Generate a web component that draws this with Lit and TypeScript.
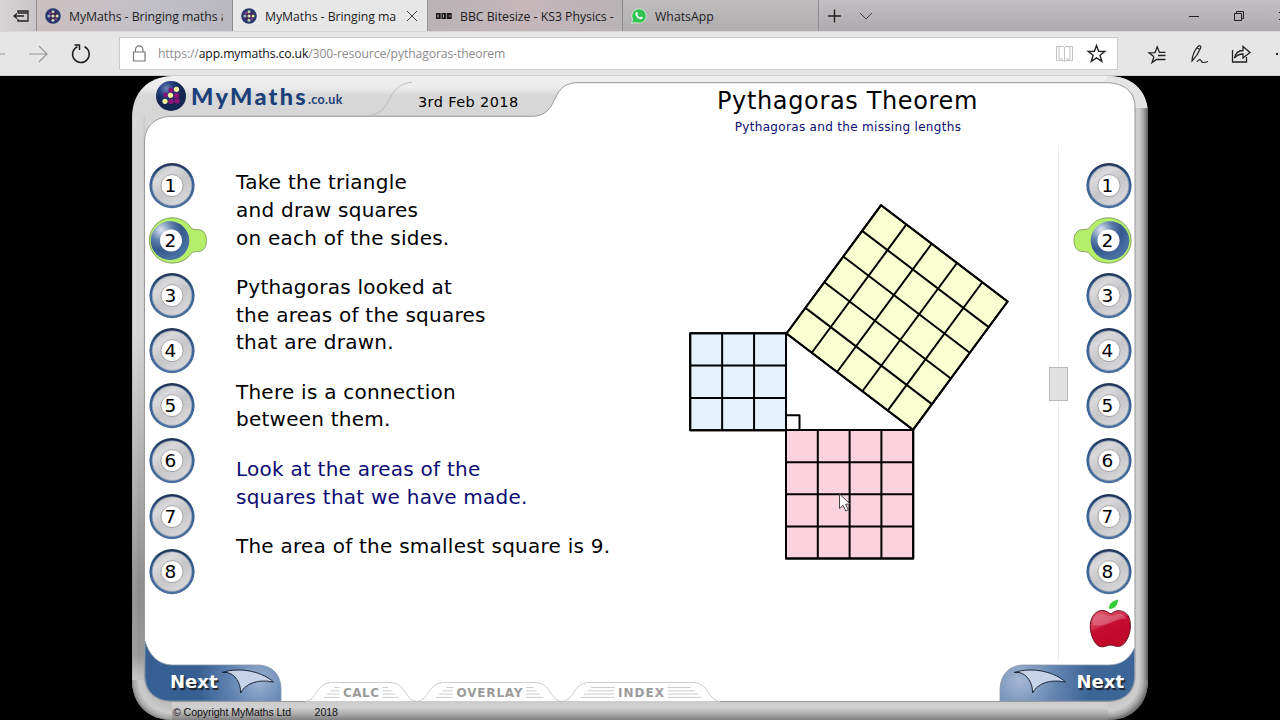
import { LitElement, html, svg, css } from "lit";
import { customElement, property } from "lit/decorators.js";

const favicon = svg`
  <circle cx="8" cy="8" r="7.8" fill="#27396f"/>
  <circle cx="8" cy="8" r="5.4" fill="#41255f"/>
  <circle cx="8" cy="3.8" r="1.5" fill="#b9d3b4"/><circle cx="3.9" cy="8" r="1.5" fill="#9fb6c8"/>
  <circle cx="12.1" cy="8" r="1.5" fill="#d6dfa0"/><circle cx="8" cy="12.2" r="1.5" fill="#b9d3b4"/>
  <circle cx="8" cy="8" r="1.6" fill="#d8e6a8"/><circle cx="5" cy="5" r="1" fill="#a04a9a"/><circle cx="11" cy="11" r="1" fill="#a04a9a"/>`;

@customElement("browser-chrome")
class BrowserChrome extends LitElement {
  static styles = css`
    :host { display: block; font: 12.3px "Open Sans", "Noto Sans", sans-serif; color: #1d1d1f; }
    svg { display: block; flex: none; }
    .tabs { display: flex; height: 31px; background: linear-gradient(#c3bfc2, #aeaaad); }
    .tab { display: flex; align-items: center; box-sizing: border-box; height: 31px; padding-left: 8px; gap: 8px;
      border-right: 1px solid #8e8b8e; white-space: nowrap; overflow: hidden; }
    .set { width: 37px; padding-left: 13px; background: linear-gradient(90deg, #d9d5d6, #c9c4c7); }
    .first { width: 196px; background: linear-gradient(90deg, #cbbfc0, #c1c0c6 60%, #b9b8be); }
    .active { width: 195px; background: #e8e7e8; border-right-color: #9b989b; }
    .bbc { width: 195px; background: linear-gradient(90deg, #b8b3b6, #c6b6ba 50%, #b8b3b6); }
    .wa { width: 196px; background: linear-gradient(#c0bdbf, #b0adaf); }
    .label { overflow: hidden; padding-top: 1px; }
    .l1 { width: 154px; } .l2 { width: 134px; } .l3 { width: 160px; }
    .l1 { letter-spacing: -.06px; }
    .l2 { letter-spacing: -.06px; }
    .l3 { letter-spacing: -.03px; }
    .tools { display: flex; align-items: center; margin-left: 9px; }
    .win { display: flex; margin-left: auto; align-items: center; }
    .bar { display: flex; box-sizing: border-box; height: 45px; align-items: center; padding-top: 1px; background: #e7e6e7;
      border-top: 1px solid #d8d6d8; border-bottom: 1px solid #cfcdcf; }
    .nav { width: 119px; }
    .addr { display: flex; align-items: center; width: 997px; height: 31px; margin-top: -1px; background: #fff; border: 1px solid #cbc9cb; box-sizing: content-box; }
    .url { flex: 1; color: #8d8b8d; font-size: 12.2px; letter-spacing: -.11px; }
    .host { color: #111; }
  `;
  render() {
    return html`
      <div class="tabs">
        <div class="tab set"><svg width="17" height="14" fill="none" stroke="#222" stroke-width="1.3"><path d="M5 4V2h10v10H5v-2M5 4h10M1 7h10M4 4.500L1 7l3 2.500"/></svg></div>
        <div class="tab first"><svg width="16" height="16">${favicon}</svg><span class="label l1">MyMaths - Bringing maths a</span></div>
        <div class="tab active"><svg width="16" height="16">${favicon}</svg><span class="label l2">MyMaths - Bringing ma</span>
          <svg width="12" height="12" stroke="#444" stroke-width="1"><path d="M0 1l10 10M10 1L0 11"/></svg></div>
        <div class="tab bbc"><svg width="16" height="8"><path fill="#1c1a1c" d="M0 1h4.700v6H0zM5.500 1h4.700v6H5.500zM11 1h4.700v6H11z"/><path stroke="#bbb" d="M2 2.500v3M7.500 2.500v3M12.800 4h2"/></svg><span class="label l3">BBC Bitesize - KS3 Physics -</span></div>
        <div class="tab wa"><svg width="16" height="16"><path d="M.6 15.500L1.700 11.500A7.200 7.200 0 1 1 4.700 14.400Z" fill="#2fc34f" stroke="#e8f3ea" stroke-width=".8"/><path d="M5.200 4.200c1-.6 1.300.2 1.700 1.400 0 .7-.8 1-.5 1.400.7 1.200 1.500 1.900 2.700 2.400.5 0 .8-1.100 1.300-.9 1.400.6 1.700.9 1.200 1.800-1.700 2-5 .2-6.400-2C4 6.700 4.200 5 5.200 4.200Z" fill="#fff"/></svg><span class="label">WhatsApp</span></div>
        <div class="tools"><svg width="52" height="16" fill="none" stroke="#222"><path stroke-width="1.400" d="M0 8h13M6.500 1.500v13"/><path d="M32 5l6 6 6-6" stroke="#444"/></svg></div>
        <div class="win"><svg width="92" height="16" fill="none" stroke="#222"><path d="M1 8.500h10M46.500 5.500h7v7h-7zM48.500 5.500v-2h7v7h-2" /><path d="M91 4l8 8M91 12l8-8"/></svg></div>
      </div>
      <div class="bar">
        <svg class="nav" width="119" height="32" fill="none"><path d="M0 16h5M29 16h18M39 8l8 8-8 8" stroke="#9a989a" stroke-width="1.200"/><path d="M77.500 8.600A8.300 8.300 0 1 0 84.500 8.700M74.500 7h5v5" stroke="#1c1c1c" stroke-width="1.500"/></svg>
        <div class="addr">
          <svg width="38" height="31" fill="none" stroke="#777" stroke-width="1.200"><path d="M13.500 14h11.500v9h-11.500zM15.500 14v-2.500a3.700 3.700 0 0 1 7.400 0V14"/></svg>
          <span class="url">https://<span class="host">app.mymaths.co.uk</span>/300-resource/pythagoras-theorem</span>
          <svg width="63" height="31" fill="none"><path d="M2.500 8.500h6.500l1.500 1 1.500-1h6.500v14h-6.500l-1.500 1-1.500-1H2.500zM10.500 9.500v14M5 8v13h4M16 8v13h-4" stroke="#c3c1c3"/><path d="M42.500 7.500l2.200 5.800 6.200.2-4.900 3.800 1.800 6-5.300-3.500-5.200 3.500 1.800-6-4.900-3.800 6.200-.2z" stroke="#222" stroke-width="1.400"/></svg>
        </div>
        <svg width="161" height="32" fill="none" stroke="#222" stroke-width="1.300">
          <path d="M36 18.700l-5-3.900 6-.2 2.200-5.800 2.200 5.600H47.500M40 17.500h7.500M39 21.500h8.500M36 18.700l-2 5.800 5-3.400"/>
          <path d="M74 23c0-5 3-12 6.500-15 1.500-1 3 .5 2 2.200C81 14 77 20 74 23Zm5-13l3 1.500M79 24c3-5 4-1 5 0s3 .5 6-.5" stroke-width="1.200"/>
          <path d="M114.500 12v12h14v-5M116.500 20c1-5 4.500-7.500 8.500-7.500V8.500l7 6-7 5.500v-4c-3.500 0-6 1-8.500 4Z"/>
          <path d="M158 16h2" stroke-width="2"/>
        </svg>
      </div>`;
  }
}

@customElement("step-nav")
class StepNav extends LitElement {
  @property() side = "left";
  @property({ type: Number }) current = 2;
  static styles = css`
    :host { display: flex; flex-direction: column; }
    svg { display: block; overflow: visible; }
    .num { font: 18.500px "DejaVu Sans", sans-serif; text-anchor: middle; }
  `;
  render() {
    const right = this.side === "right";
    const cx = right ? 40 : 28;
    return [1, 2, 3, 4, 5, 6, 7, 8].map((n) => {
      const on = n === this.current;
      return html`<svg width="68" height="55.2" viewBox="0 0 68 55.2">
        <defs>
          <linearGradient id="ring" x2="0" y2="1"><stop offset="0" stop-color="#1c3050"/><stop offset=".35" stop-color="#355d92"/><stop offset="1" stop-color="#4c719f"/></linearGradient>
          <linearGradient id="face" x2=".7" y2="1"><stop offset="0" stop-color="#b5b5b9"/><stop offset=".3" stop-color="#dadadc"/><stop offset=".6" stop-color="#c6c6c8"/><stop offset="1" stop-color="#d8d8da"/></linearGradient>
          <radialGradient id="ball" cx=".27" cy=".22" r=".75"><stop offset="0" stop-color="#dfe6f2"/><stop offset=".4" stop-color="#5b7dab"/><stop offset=".7" stop-color="#34598c"/><stop offset="1" stop-color="#486fa3"/></radialGradient>
        </defs>
        ${on
          ? svg`<g transform="${right ? "translate(67.500 0) scale(-1 1)" : ""}">
              <path d="M28 4.800c9 0 15.500 4.500 19 10 1.500 1.500 2.700 1.800 6.500 1.800 6.800 0 9 5.500 9 11s-2.200 11-9 11c-3.800 0-5 .5-6.500 2-3.500 5.500-10 9.500-19 9.500a22.650 22.650 0 0 1 0-45.300Z" fill="#b5ee68" stroke="#86a262" stroke-width="1"/>
            </g>
            <circle cx="${right ? 41 : 26}" cy="27.600" r="19.300" fill="url(#ball)"/>`
          : svg`<circle cx="${cx}" cy="27.600" r="22.600" fill="url(#ring)"/>
            <circle cx="${cx}" cy="27.600" r="19.800" fill="url(#face)" stroke="#8fa0b8" stroke-width=".7"/>
            <circle cx="${cx}" cy="27.600" r="11" fill="#fff" stroke="#77777c" stroke-width=".6"/>`}
        ${on ? svg`<circle cx="${cx - (right ? 0.5 : 1)}" cy="27.600" r="11" fill="#fff"/>` : ""}
        <text class="num" x="${cx - 1.500}" y="34.300">${n}</text>
      </svg>`;
    });
  }
}

const grid = (n: number, o: number[], u: number[], v: number[], fill: string) => {
  const at = (i: number, j: number) =>
    `${o[0] + (u[0] * i + v[0] * j) / n} ${o[1] + (u[1] * i + v[1] * j) / n}`;
  let d = "";
  for (let i = 1; i < n; i++) d += `M${at(i, 0)}L${at(i, n)}M${at(0, i)}L${at(n, i)}`;
  const edge = `M${at(0, 0)}L${at(n, 0)}L${at(n, n)}L${at(0, n)}Z`;
  return svg`<path d="${edge}" fill="${fill}"/><path d="${edge}${d}" fill="none"/>`;
};

@customElement("squares-diagram")
class SquaresDiagram extends LitElement {
  static styles = css`:host, svg { display: block; }`;
  render() {
    return html`<svg width="360" height="400" viewBox="670 180 360 400" stroke="#000" stroke-width="2" stroke-linejoin="round">
      ${grid(3, [690.2, 333.3], [95.8, 0], [0, 96.9], "#e3f2fc")}
      ${grid(4, [786, 430], [127.2, 0], [0, 128.600], "#fad3df")}
      ${grid(5, [786.500, 333.500], [126.500, 96.300], [94.600, -128.300], "#f9ffd0")}
      <path d="M786 415.200h13.500V430" fill="none"/>
      <path d="M839.500 494v14.500l3.600-3.200 2.700 5.700 2.500-1.200-2.700-5.500 4.400-.4Z" fill="#fff" stroke="#444" stroke-width="1"/>
    </svg>`;
  }
}

@customElement("frame-art")
class FrameArt extends LitElement {
  static styles = css`:host, svg { display: block; }`;
  render() {
    return html`<svg width="1280" height="644" viewBox="0 76 1280 644">
      <defs>
        <linearGradient id="left" gradientUnits="userSpaceOnUse" x1="0" y1="76" x2="0" y2="720">
          <stop offset="0" stop-color="#f0f0f0"/><stop offset=".018" stop-color="#ececec"/><stop offset=".03" stop-color="#d8d8d8"/><stop offset=".1" stop-color="#d3d3d3"/>
          <stop offset=".4" stop-color="#d5d5d5"/><stop offset=".62" stop-color="#acacac"/><stop offset=".8" stop-color="#8b8b8b"/><stop offset=".9" stop-color="#979797"/><stop offset=".935" stop-color="#c2c2c2"/><stop offset="1" stop-color="#8c8c8c"/>
        </linearGradient>
        <linearGradient id="right" gradientUnits="userSpaceOnUse" x1="1134" y1="0" x2="1148" y2="0">
          <stop offset="0" stop-color="#c9c9c9"/><stop offset=".35" stop-color="#cfcfcf"/><stop offset=".7" stop-color="#a4a4a4"/><stop offset="1" stop-color="#5e5e5e"/>
        </linearGradient>
        <linearGradient id="base" gradientUnits="userSpaceOnUse" x1="0" y1="701" x2="0" y2="720">
          <stop offset="0" stop-color="#cccccc"/><stop offset=".35" stop-color="#d0d0d0"/><stop offset=".7" stop-color="#aaaaaa"/><stop offset="1" stop-color="#808080"/>
        </linearGradient>
        <linearGradient id="edge" gradientUnits="userSpaceOnUse" x1="131" y1="0" x2="145" y2="0">
          <stop offset="0" stop-color="#555" stop-opacity=".3"/><stop offset=".25" stop-color="#fff" stop-opacity=".1"/><stop offset=".6" stop-color="#fff" stop-opacity="0"/><stop offset="1" stop-color="#777" stop-opacity=".12"/>
        </linearGradient>
        <radialGradient id="corner" gradientUnits="userSpaceOnUse" cx="1108" cy="680" r="40">
          <stop offset=".65" stop-color="#c9c9c9"/><stop offset=".77" stop-color="#cfcfcf"/><stop offset=".9" stop-color="#a4a4a4"/><stop offset="1" stop-color="#6c6c6c"/>
        </radialGradient>
        <radialGradient id="cornerL" gradientUnits="userSpaceOnUse" cx="172" cy="680" r="40">
          <stop offset=".65" stop-color="#c0c0c0"/><stop offset=".82" stop-color="#cccccc"/><stop offset=".95" stop-color="#a8a8a8"/><stop offset="1" stop-color="#8a8a8a"/>
        </radialGradient>
        <radialGradient id="nextL" gradientUnits="userSpaceOnUse" cx="259" cy="681" r="62">
          <stop offset="0" stop-color="#9db2d2"/><stop offset=".5" stop-color="#5e82b0"/><stop offset="1" stop-color="#365f93"/>
        </radialGradient>
        <radialGradient id="nextR" gradientUnits="userSpaceOnUse" cx="1020" cy="681" r="70">
          <stop offset="0" stop-color="#a5b8d4"/><stop offset=".5" stop-color="#6686b2"/><stop offset="1" stop-color="#3c6598"/>
        </radialGradient>
      </defs>
      <path d="M132 118C132 92 148 77 172 76H1108C1132 76 1148 92 1148 114V680C1148 704 1132 720 1108 720H172C148 720 132 704 132 680Z" fill="url(#left)"/>
      <path d="M132 116h13v564h-13Z" fill="url(#edge)"/>
      <path d="M1108 76C1132 76 1146 90 1147.500 109H1134V90H1100Z" fill="#e4e4e4"/>
      <path d="M1134 108h14v573H1134Z" fill="url(#right)"/>
      <path d="M170 700H1110V720H170Z" fill="url(#base)"/>
      <path d="M1108 720C1132 720 1148 704 1148 680H1130L1108 700Z" fill="url(#corner)"/>
      <path d="M172 720C148 720 132 704 132 680H146L172 700Z" fill="url(#cornerL)"/>
      <path d="M144.500 142C144.500 126 156 116.300 172 116.300H532C560 116 549 85 575 82.700H1106C1124 82.700 1135 92 1135 107V676C1135 692 1124 701.500 1108 701.500H172C155 701.500 144.500 692 144.500 676Z" fill="#fff" stroke="#999" stroke-width="1"/>
      <path d="M367 116C394 114 385 84 412 82.300" fill="none" stroke="#bcbcbc"/>
      <path d="M145 641C149 655 158 664.700 172 665H259C273 666 281 675 281 689V701H172C155 701 145 691 145 676Z" fill="url(#nextL)" stroke="#8a97a8" stroke-width=".8"/>
      <path d="M1134.500 648C1130 658 1122 665 1109 665H1022C1008 666 1000 676 1000 690V701H1108C1124 701 1134.500 692 1134.500 676Z" fill="url(#nextR)" stroke="#8a97a8" stroke-width=".8"/>
    </svg>`;
  }
}

const swoosh = html`<svg width="54" height="28" viewBox="221 668 54 28"><path d="M222 673.500C242 667 264 674 273.500 683C258 680 246 684 240.500 694C241 684 235 675 227 673.500L222 673.500Z" fill="#c6d3e8" stroke="#1c2737" stroke-width="1"/></svg>`;

const folderTab = (w: number, label: string, textWidth: number) => {
  const a = (w - textWidth) / 2 - 2;
  const b = w - a;
  let d = "";
  for (let i = 0; i < 4; i++) {
    const y = 8.500 + i * 3.300;
    d += `M${29 - i * 3.500} ${y}H${a}M${b} ${y}H${w - 29 + i * 3.500}`;
  }
  return html`<svg width="${w}" height="23" viewBox="0 0 ${w} 23" fill="none" stroke="#cdcdcd">
    <path d="M0 22.500C12 22 11 4 26 3.500H${w - 26}C${w - 11} 4 ${w - 12} 22 ${w} 22.500" fill="#fff"/>
    <path d="${d}"/>
    <text class="tablabel" x="${w / 2}" y="17.900" textLength="${textWidth - 3}">${label}</text>
  </svg>`;
};

@customElement("app-root")
class AppRoot extends LitElement {
  static styles = css`
    :host { display: block; width: 1280px; height: 720px; overflow: hidden; background: #000; font-family: "DejaVu Sans", sans-serif; color: #000; }
    svg { display: block; flex: none; }
    .stage { display: grid; height: 644px; }
    .stage > * { grid-area: 1 / 1; }
    .content { display: grid; grid-template: 81.500px 502.500px 42px 18px / 992px; width: 992px; margin-left: 144px; }
    .head { display: flex; }
    .logo { display: flex; flex: none; box-sizing: border-box; width: 273px; padding: 4px 0 0 11px; }
    .brand { font: 900 23.500px/33px Lato, sans-serif; color: #1b4079; letter-spacing: 2.300px; margin-left: 4px; }
    .dom { font: 700 12.500px/40px Lato, sans-serif; color: #1b4079; letter-spacing: .3px; }
    .date { flex: none; width: 128px; box-sizing: border-box; font-size: 14.500px; line-height: 53px; letter-spacing: .38px; padding-left: 1px; }
    .titles { flex: none; width: 591px; margin-right: 0; text-align: center; }
    .title { font-size: 24px; line-height: 30px; letter-spacing: .65px; padding: 10px 0 0 14px; }
    .sub { font-size: 12px; line-height: 16px; letter-spacing: .32px; color: #0c0c72; padding: 3px 0 0 15px; }
    .body { display: grid; grid-template-columns: 92px 434px 388px 78px; }
    .left { width: 68px; }
    .copy { padding-top: 11.700px; font-size: 20px; line-height: 27.700px; letter-spacing: .24px; white-space: nowrap; }
    .copy p { margin: 0 0 21.700px; }
    .blue { color: #0c0c72; }
    .plot { padding-top: 22.500px; display: grid; grid-template-columns: 360px 1fr; }
    .slider { display: grid; justify-items: center; width: 20px; height: 516px; margin-top: -35px; margin-left: 18px; }
    .slider > * { grid-area: 1 / 1; }
    .rail { width: 1px; background: #ededed; }
    .thumb { width: 17px; height: 32px; margin-top: 222px; background: #dededeea; border: 1px solid #b9b9b9; }
    .right { display: flex; flex-direction: column; align-items: flex-start; padding-left: 11px; }
    .apple { margin: 0 0 0 19px; }
    .foot { display: flex; align-items: flex-end; }
    .next { display: flex; align-items: center; height: 42px; color: #fff; font: bold 18px "DejaVu Sans", sans-serif; text-shadow: 1.500px 1.500px 1px #111c; box-sizing: border-box; }
    .n1 { width: 161px; padding-left: 26px; gap: 3px; }
    .n2 { margin-left: auto; padding-right: 12px; gap: 10px; }
    .tablabel { font: bold 12px "DejaVu Sans", sans-serif; fill: #9b9b9b; stroke: none; text-anchor: middle; }
    .legal { display: flex; gap: 23.500px; padding-left: 29px; font: 10.600px/20px "Liberation Sans", sans-serif; letter-spacing: -.07px; color: #111; white-space: pre; }
  `;
  render() {
    return html`
      <browser-chrome></browser-chrome>
      <div class="stage">
        <frame-art></frame-art>
        <div class="content">
          <div class="head">
            <div class="logo">
              <svg width="32" height="32" viewBox="0 0 32 32">
                <defs><radialGradient id="orb" cx=".35" cy=".25"><stop offset="0" stop-color="#6f87bb"/><stop offset=".5" stop-color="#213b7c"/><stop offset="1" stop-color="#132752"/></radialGradient></defs>
                <circle cx="16" cy="16" r="15" fill="url(#orb)"/>
                <g fill="#8b1378"><circle cx="16" cy="10.200" r="2.600"/><circle cx="10.500" cy="15" r="2.400"/><circle cx="21.500" cy="15.500" r="2.800"/><circle cx="16" cy="21.500" r="2.800"/><circle cx="22" cy="21" r="2.700"/></g>
                <g fill="#f4f59a"><circle cx="21.500" cy="9.300" r="2.600"/><circle cx="15.500" cy="15.300" r="2.600"/><circle cx="10" cy="21.300" r="2.600"/></g>
              </svg>
              <span class="brand">MyMaths</span><span class="dom">.co.uk</span>
            </div>
            <div class="date">3rd Feb 2018</div>
            <div class="titles"><div class="title">Pythagoras Theorem</div><div class="sub">Pythagoras and the missing lengths</div></div>
          </div>
          <div class="body">
            <step-nav class="left" side="left"></step-nav>
            <div class="copy">
              <p>Take the triangle<br>and draw squares<br>on each of the sides.</p>
              <p>Pythagoras looked at<br>the areas of the squares<br>that are drawn.</p>
              <p>There is a connection<br>between them.</p>
              <p class="blue">Look at the areas of the<br>squares that we have made.</p>
              <p>The area of the smallest square is 9.</p>
            </div>
            <div class="plot">
              <squares-diagram></squares-diagram>
              <div class="slider"><div class="rail"></div><div class="thumb"></div></div>
            </div>
            <div class="right">
              <step-nav side="right"></step-nav>
              <svg class="apple" width="44" height="50" viewBox="1088 598 44 50">
                <defs><linearGradient id="skin" x2=".5" y2="1"><stop offset="0" stop-color="#e0526b"/><stop offset=".42" stop-color="#d23350"/><stop offset=".5" stop-color="#c60c30"/><stop offset="1" stop-color="#c00829"/></linearGradient></defs>
                <path d="M1109 612C1104 608 1098 609 1094.500 613C1088 620 1089.500 634 1095.500 642C1099 647 1104 646 1106 645C1109 643.800 1112 643.800 1115 645C1118 646 1122 645.500 1125 641.500C1131 634 1132 621 1128 614.500C1124 609 1117 608.500 1113 611.500C1111.500 613 1110.500 613 1109 612Z" fill="url(#skin)" stroke="#6c1024" stroke-width="1"/>
                <path d="M1093 624C1091.500 619 1094 613 1100 612.500C1106 613 1108 616 1114 614.500C1119 611.500 1125 613 1126.500 618C1114 617 1108 627 1093 624Z" fill="#fff" opacity=".18"/>
                <path d="M1109 608C1108.500 602 1113 600 1118 598.500C1118 604 1115 608 1109 608Z" fill="#35cf38"/>
              </svg>
            </div>
          </div>
          <div class="foot">
            <div class="next n1"><span>Next</span>${swoosh}</div>
            ${folderTab(112, "CALC", 39)}${folderTab(145, "OVERLAY", 69)}${folderTab(158, "INDEX", 49)}
            <div class="next n2">${swoosh}<span>Next</span></div>
          </div>
          <div class="legal"><span>© Copyright MyMaths Ltd</span><span>2018</span></div>
        </div>
      </div>`;
  }
}
